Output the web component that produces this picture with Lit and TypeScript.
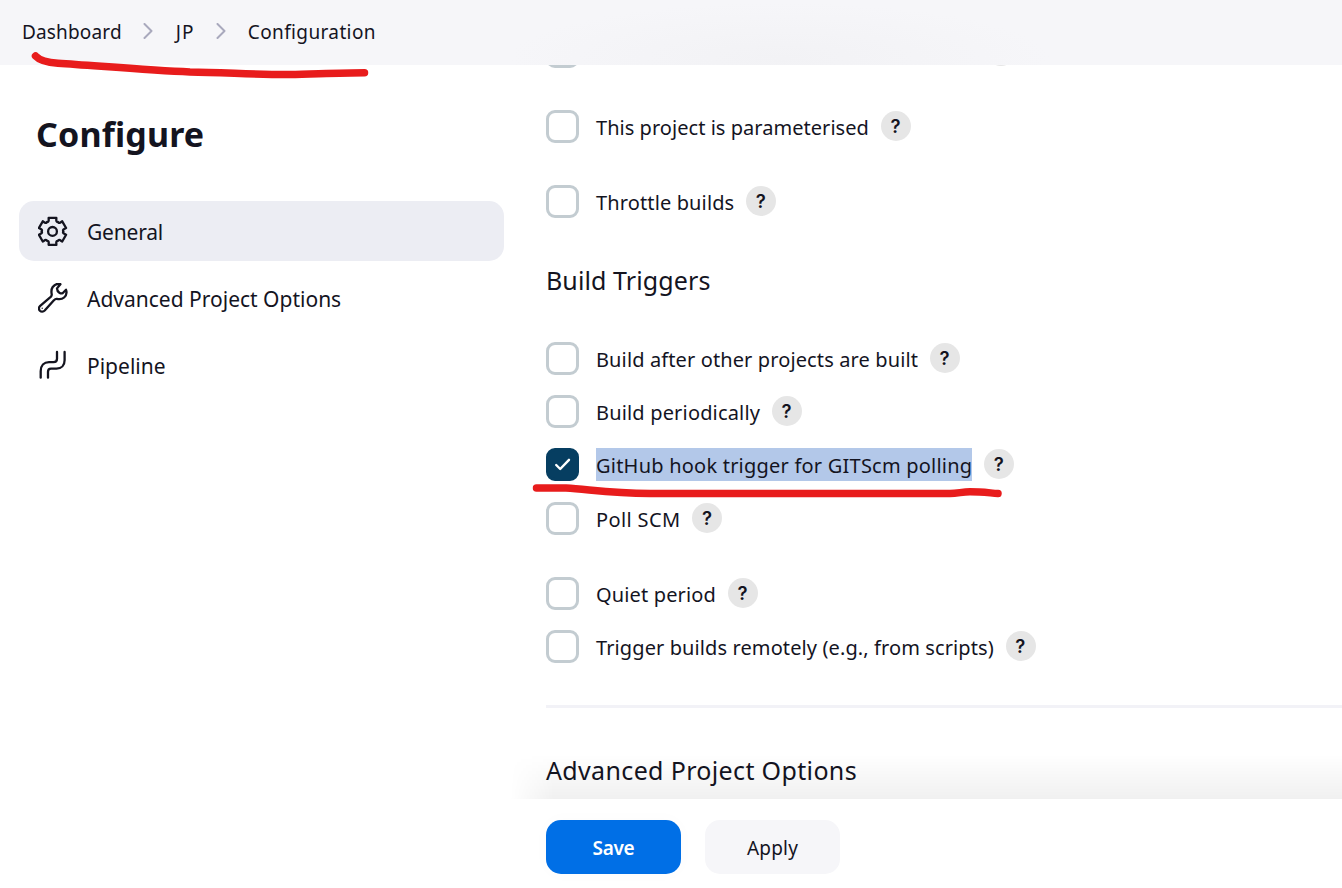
import { LitElement, css, html, svg, nothing } from "lit";
import { customElement, property } from "lit/decorators.js";
import { styleMap } from "lit/directives/style-map.js";

interface Trigger {
  label: string;
  tracking: number; // px between letters
  checked?: boolean;
  selected?: boolean;
}

const GENERAL: Trigger[] = [
  { label: "This project is parameterised", tracking: 0.04 },
  { label: "Throttle builds", tracking: 0.13 },
];

const TRIGGERS: Trigger[] = [
  { label: "Build after other projects are built", tracking: 0.12 },
  { label: "Build periodically", tracking: 0.17 },
  { label: "GitHub hook trigger for GITScm polling", tracking: 0.22, checked: true, selected: true },
  { label: "Poll SCM", tracking: 0.37 },
];

const TIMING: Trigger[] = [
  { label: "Quiet period", tracking: 0.15 },
  { label: "Trigger builds remotely (e.g., from scripts)", tracking: 0.105 },
];

// Six-tooth cog outline around the centre of a 30x30 box.
function cogPath(): string {
  const at = (deg: number, r: number) => {
    const a = ((deg - 90) * Math.PI) / 180;
    return `${(14.5 + r * Math.cos(a)).toFixed(2)} ${(15.4 + r * Math.sin(a)).toFixed(2)}`;
  };
  let d = "";
  for (let t = 0; t < 360; t += 60) {
    d += `${t ? "L" : "M"}${at(t - 16, 14)}L${at(t + 16, 14)}L${at(t + 19, 11.6)}Q${at(t + 24, 10)} ${at(t + 30, 10.9)}`;
    d += `Q${at(t + 36, 10)} ${at(t + 41, 11.6)}`;
  }
  return d + "Z";
}

const icons = {
  cog: svg`<path d=${cogPath()} /><circle cx="14.5" cy="15.4" r="4.4" />`,
  wrench: svg`<path d="M22.4 1.2C19.5.4 16.5 1.7 14.7 4C13.3 6 13.2 8.5 13.7 11.2C13.9 12.5 13.4 13.2 12.7 13.9L2.2 22.9C.6 24.4.7 26.4 1.9 27.7C3.2 29 5.3 28.9 6.7 27.5L15.9 17.2C16.7 16.4 17.5 15.7 18.8 15.9C21.5 16.5 24.2 16.2 26.1 14.5C28.3 12.5 29.1 9.8 28 6.8L24.6 10.2C23.2 10.7 19.2 9.9 19 5.4Z" /><path class="hole" d="M4.2 25.2V25.3" />`,
  pipeline: svg`<path d="M2.7 27.7V21.2C2.7 15.7 6 12.1 11 12.1H15.5Q19 12.1 19 8.7V1.9M10 27.7V21.7Q10 18.6 13 18.6H18.5C23.5 18.6 26.6 15.2 26.6 10.2V1.9" />`,
};

@customElement("jk-check")
export class JkCheck extends LitElement {
  static styles = css`
    :host {
      display: flex;
      align-items: center;
      height: 33px;
    }
    .box {
      box-sizing: border-box;
      flex: none;
      width: 33px;
      height: 33px;
      border: 3px solid #c3ccd1;
      border-radius: 9px;
      background: #fff;
      display: grid;
      place-items: center;
    }
    .box.checked {
      border-color: #063e61;
      background: #063e61;
    }
    .box svg {
      width: 27px;
      height: 27px;
      fill: none;
      stroke: #fff;
      stroke-width: 2.4;
      stroke-linecap: round;
      stroke-linejoin: round;
    }
    .label {
      margin-left: 17px;
      height: 33px;
      line-height: 35px;
      white-space: nowrap;
    }
    .label.selected {
      background: #b3c8e9;
    }
    .help {
      flex: none;
      box-sizing: border-box;
      width: 30px;
      height: 30px;
      margin: 0 0 1px 12px;
      padding-right: 1px;
      border-radius: 50%;
      background: #e6e6e6;
      font: 600 18.5px/31px Inter, sans-serif;
      text-align: center;
    }
  `;

  @property() label = "";
  @property({ type: Number }) tracking = 0;
  @property({ type: Boolean }) checked = false;
  @property({ type: Boolean }) selected = false;

  render() {
    return html`
      <span class="box ${this.checked ? "checked" : ""}">
        ${this.checked ? html`<svg viewBox="0 0 27 27"><path d="M7.2 14L11.2 18L20 8.8" /></svg>` : nothing}
      </span>
      <span
        class="label ${this.selected ? "selected" : ""}"
        style=${styleMap({ letterSpacing: `${this.tracking}px` })}
      >${this.label}</span>
      <span class="help">?</span>
    `;
  }
}

@customElement("app-root")
export class AppRoot extends LitElement {
  static styles = css`
    :host {
      display: grid;
      grid-template-rows: 65px 1fr;
      position: relative;
      width: 100%;
      height: 100vh;
      overflow: hidden;
      background: #fff;
      color: #14141f;
      font-family: "Noto Sans", "Open Sans", sans-serif;
      font-size: 20px;
    }

    header {
      display: flex;
      align-items: center;
      padding: 0 22px;
      background: radial-gradient(ellipse 270px 55px at 780px 58px, #f2f2f5, #f2f2f500), #f6f6f9;
      font-size: 19px;
      line-height: 26px;
      letter-spacing: 0.15px;
    }
    header span {
      margin-bottom: 2px;
    }
    header .job {
      margin-left: 1px;
      letter-spacing: 1.2px;
    }
    header .page {
      letter-spacing: 0.37px;
    }
    .chev {
      width: 10px;
      height: 16px;
      margin: 0 22px 3px 21px;
      fill: none;
      stroke: #a9a9bd;
      stroke-width: 2;
      stroke-linecap: round;
      stroke-linejoin: round;
    }

    .body {
      display: grid;
      grid-template-columns: 504px 1fr;
      min-height: 0;
    }

    aside {
      padding: 41px 0 0 19px;
    }
    h1 {
      margin: 0 0 39px 17px;
      font-size: 34px;
      line-height: 56px;
      font-weight: 700;
      letter-spacing: 0.15px;
    }
    .task {
      display: flex;
      align-items: center;
      gap: 19px;
      height: 60px;
      margin-bottom: 7px;
      padding-left: 19px;
      border-radius: 15px;
      font-size: 21px;
    }
    .task span {
      padding-top: 2px;
    }
    .task.active {
      background: #ecedf3;
      letter-spacing: -0.2px;
    }
    .task svg {
      width: 30px;
      height: 30px;
      fill: none;
      stroke: #14141f;
      stroke-width: 2.3;
      stroke-linecap: round;
      stroke-linejoin: round;
    }
    .task .hole {
      stroke-width: 1.4;
    }

    main {
      display: grid;
      grid-template-rows: 1fr 89px;
      min-width: 0;
      min-height: 0;
    }
    .form {
      min-height: 0;
      overflow: hidden;
      padding-left: 42px;
    }
    .group {
      display: flex;
      flex-direction: column;
      gap: 42px;
      margin-top: -30px;
    }
    .group.tight {
      gap: 20.2px;
      margin-top: 42px;
    }
    /* Row scrolled away under the header, only its lower rim shows */
    .tucked {
      display: flex;
      justify-content: space-between;
      width: 470px;
      height: 33px;
    }
    .tucked .box {
      box-sizing: border-box;
      width: 33px;
      border: 3px solid #c3ccd1;
      border-radius: 9px;
    }
    .tucked .dot {
      width: 30px;
      height: 31px;
      border-radius: 50%;
      background: #e6e6e6;
    }
    h2 {
      margin: 43px 0 0;
      padding-bottom: 1px;
      font-size: 25px;
      line-height: 38px;
      font-weight: 400;
      letter-spacing: 0.1px;
    }
    hr {
      height: 3px;
      margin: 42px 0 43px;
      border: 0;
      background: #f2f2f7;
    }
    h2.next {
      margin: 0;
      letter-spacing: 0.35px;
    }

    footer {
      z-index: 1;
      display: flex;
      gap: 24px;
      padding: 21px 0 0 42px;
      background: #fff;
    }
    /* Fade above the sticky button bar */
    .fade {
      position: absolute;
      left: 504px;
      right: 0;
      bottom: 89px;
      height: 44px;
      background: linear-gradient(to top, rgba(0, 0, 0, 0.058), transparent);
      mask-image: linear-gradient(to right, transparent 6px, #000 50px);
    }
    button {
      width: 135px;
      height: 54px;
      padding: 2px 0 0;
      border: 0;
      border-radius: 15px;
      background: #f6f6f9;
      color: inherit;
      font: inherit;
      font-size: 19px;
      letter-spacing: 0.2px;
    }
    button.primary {
      background: #006fe6;
      color: #fff;
      font-weight: 600;
      letter-spacing: -0.3px;
      box-shadow: 0 0 18px rgba(0, 0, 0, 0.02);
    }

    .marks {
      position: absolute;
      inset: 0;
      z-index: 2;
      width: 1342px;
      height: 888px;
      pointer-events: none;
      fill: none;
      stroke: #e81c1c;
      stroke-width: 7.5;
      stroke-linecap: round;
      stroke-linejoin: round;
    }
  `;

  private chevron() {
    return html`<svg class="chev" viewBox="0 0 10 16"><path d="M1.5 1L8.5 8L1.5 15" /></svg>`;
  }

  private check(t: Trigger) {
    return html`<jk-check
      .label=${t.label}
      .tracking=${t.tracking}
      ?checked=${t.checked}
      ?selected=${t.selected}
    ></jk-check>`;
  }

  private task(icon: unknown, label: string, active = false) {
    return html`
      <div class="task ${active ? "active" : ""}">
        <svg viewBox="0 0 30 30">${icon}</svg>
        <span>${label}</span>
      </div>
    `;
  }

  render() {
    return html`
      <header>
        <span>Dashboard</span>${this.chevron()}<span class="job">JP</span>${this.chevron()}<span class="page">Configuration</span>
      </header>
      <div class="body">
        <aside>
          <h1>Configure</h1>
          ${this.task(icons.cog, "General", true)}
          ${this.task(icons.wrench, "Advanced Project Options")}
          ${this.task(icons.pipeline, "Pipeline")}
        </aside>
        <main>
          <div class="form">
            <div class="group">
              <div class="tucked"><span class="box"></span><span class="dot"></span></div>
              ${GENERAL.map((t) => this.check(t))}
            </div>
            <h2>Build Triggers</h2>
            <div class="group tight">${TRIGGERS.map((t) => this.check(t))}</div>
            <div class="group tight">${TIMING.map((t) => this.check(t))}</div>
            <hr />
            <h2 class="next">Advanced Project Options</h2>
          </div>
          <footer>
            <button class="primary">Save</button>
            <button>Apply</button>
          </footer>
        </main>
      </div>
      <div class="fade"></div>
      <svg class="marks" viewBox="0 0 1342 888">
        <path d="M35.5 56C40 61 48 62.5 58 63.2C100 66 150 70.5 190 72C225 72.5 260 74.8 290 74.5C315 74 340 72.7 364.5 72.7" />
        <path d="M536.5 488H566C590 489.5 610 493 650 493.5H950C958 493.5 962 491.8 970 491.8C982 491.8 990 493 998 493.5" />
      </svg>
    `;
  }
}
